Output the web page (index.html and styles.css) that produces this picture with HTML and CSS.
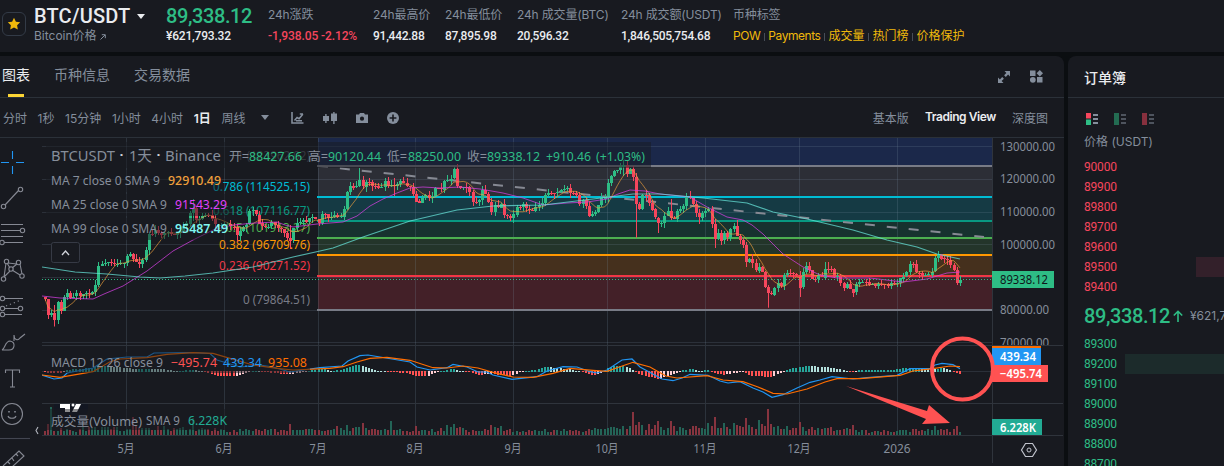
FILE: index.html
```
<!DOCTYPE html>
<html lang="zh-CN">
<head>
    <meta charset="UTF-8">
    <title>BTC/USDT</title>
    <meta name="viewport" content="width=device-width, initial-scale=1">
    <link rel="stylesheet" href="styles.css">
</head>
<body>
    <header class="ticker">
        <div class="star">
            <svg width="14" height="14" viewBox="0 0 14 14"><path d="M7 .8l1.9 3.9 4.3.6-3.1 3 .7 4.3L7 10.6l-3.8 2 .7-4.3-3.1-3 4.3-.6z" fill="#f0b90b"/></svg>
        </div>
        <div class="pair">
            <div class="pair-name">BTC/USDT <i class="caret"></i></div>
            <div class="pair-sub">Bitcoin价格 <svg width="6" height="6" viewBox="0 0 6 6"><path d="M.5 5.5L5 1M1.8.7h3.5v3.5" fill="none" stroke="#848e9c"/></svg></div>
        </div>
        <div class="last">
            <div class="last-price">89,338.12</div>
            <div class="last-cny">¥621,793.32</div>
        </div>
        <div class="stat change"><label>24h涨跌</label><b class="down">-1,938.05 -2.12%</b></div>
        <div class="stat high"><label>24h最高价</label><b>91,442.88</b></div>
        <div class="stat low"><label>24h最低价</label><b>87,895.98</b></div>
        <div class="stat vol"><label>24h 成交量(BTC)</label><b>20,596.32</b></div>
        <div class="stat amount"><label>24h 成交额(USDT)</label><b>1,846,505,754.68</b></div>
        <div class="stat tags">
            <label>币种标签</label>
            <p><a class="latin">POW</a><a class="latin">Payments</a><a>成交量</a><a>热门榜</a><a>价格保护</a></p>
        </div>
    </header>

    <div class="layout">
        <main class="panel chart-panel">
            <nav class="tabs">
                <a class="active">图表</a><a>币种信息</a><a>交易数据</a>
                <span class="tab-icons">
                    <svg width="12" height="12" viewBox="0 0 12 12" fill="#848e9c"><path d="M6.5 0H12v5.500l-1.900-1.900-2.300 2.300-1.700-1.700 2.300-2.300zM5.500 12H0V6.500l1.900 1.900 2.300-2.300 1.700 1.700-2.300 2.300z"/></svg>
                    <svg width="13" height="13" viewBox="0 0 13 13" fill="#848e9c"><path d="M0 .5h5.500V6H0zM7 7h5.500v5.500H7zM9.800 0L13 3.200 9.800 6.400 6.600 3.200z"/><circle cx="2.800" cy="9.800" r="2.900"/></svg>
                </span>
            </nav>
            <div class="intervals">
                <a>分时</a><a>1秒</a><a>15分钟</a><a>1小时</a><a>4小时</a><a class="active">1日</a><a>周线</a>
                <i class="caret small"></i>
                <svg width="13" height="12" viewBox="0 0 13 12" fill="none" stroke="#848e9c" stroke-width="1.6"><path d="M1 0v11h11.500M3.500 8.500l2.600-3 2 1.200L12 2M8.800 2H12M5 8.800h6"/></svg>
                <svg width="14" height="12" viewBox="0 0 14 12" fill="#848e9c"><path d="M2.200 2h1.400v2H6v5H3.600v2H2.200V9H0V4h2.200zM10.200 0h1.400v1.500H14V9h-2.400v3h-1.400V9H8V1.500h2.200z"/></svg>
                <svg width="12" height="10" viewBox="0 0 12 10" fill="#848e9c"><path fill-rule="evenodd" d="M0 1.600h3L4 0h4l1 1.600h3V10H0zM6 3.600a2 2 0 100 4.200 2 2 0 000-4.200z"/></svg>
                <svg width="12" height="12" viewBox="0 0 12 12"><circle cx="6" cy="6" r="6" fill="#848e9c"/><path d="M6 2.600v6.800M2.600 6h6.800" stroke="#181a20" stroke-width="1.600"/></svg>
                <span class="views"><a>基本版</a><a class="active">Trading View</a><a>深度图</a></span>
            </div>
            <div class="board">
                <svg class="tools" width="42" height="328" viewBox="0 138 42 328" fill="none" stroke="#868993" stroke-width="1.1">
                    <path d="M12.500 151v8M12.500 166v8M1 162.500h8M16 162.500h8" stroke="#2196f3"/>
                    <path d="M5 205l14-15"/><circle cx="3.500" cy="206.500" r="2.200"/><circle cx="20.500" cy="189.500" r="2.200"/>
                    <path d="M1 224.500h22M1 230.500h19M1 236.500h22M4 242.500h19"/><circle cx="22.500" cy="230.500" r="2.200"/><circle cx="2" cy="242.500" r="2.200"/>
                    <path d="M4 277L6 263M8 263l9 1M20 264l2 10M4 277l6-6M12 268l5-4M12 270l8 5M7 263l3 5"/>
                    <circle cx="3.500" cy="279" r="2.200"/><circle cx="6.500" cy="261.500" r="2.200"/><circle cx="18.500" cy="262.500" r="2.200"/><circle cx="22" cy="276" r="2.200"/><circle cx="11" cy="269" r="2.200"/>
                    <path d="M5 298.500h18M5 308.500h13M5 314.500h17"/><path d="M6 306L21 300" stroke-dasharray="1.200 3"/><circle cx="2.500" cy="298.500" r="2.200"/><circle cx="2.500" cy="308.500" r="2.200"/><circle cx="20.500" cy="308.500" r="2.200"/><circle cx="2.500" cy="314.500" r="2.200"/>
                    <path d="M2 350c3-1 3-9 8-9 6 1 5 9-1 9zM14 341v-6M14 335c0 5 4 6 6 3l5-4"/>
                    <path d="M5.500 373v-3h14v3M12.500 370v17M10 387h5"/>
                    <circle cx="12" cy="414" r="10.500"/><path d="M8 416c1 3 7 3 8 0"/><path d="M9 411v1.500M15 411v1.500" stroke-width="1.600"/>
                    <path d="M0 438.500h30" stroke="#434651"/>
                    <path d="M3 466l16-15 5 5-12 11M8 462l2 2M12 458l2 3M16 454l2 2"/>
                    <path d="M38 427l-2 3.500 2 3.500" stroke="#b2b5be"/>
                </svg>
                <svg id="chart" width="1021" height="328" viewBox="42 138 1021 328">
                    <g id="labels-back"></g>
                    <g id="zones"></g>
                    <g id="grid"></g>
                    <g id="fib"></g>
                    <g id="series"></g>
                    <g id="legend"></g>
                    <g id="axis"></g>
                    <g id="marks">
                        <circle cx="962.500" cy="369" r="30.500" fill="none" stroke="#ff5252" stroke-width="4"/>
                        <path d="M846 386L927 411 929 405 950 423 922 424 926 419z" fill="#ff5252"/>
                    </g>
                </svg>
            </div>
        </main>

        <aside class="panel book">
            <h2>订单簿</h2>
            <div class="book-modes">
                <svg width="12" height="12" viewBox="0 0 12 12"><path d="M0 0h5v5.500H0z" fill="#f6465d"/><path d="M0 6.500h5V12H0z" fill="#2ebd85"/><path d="M7 1h5v2H7zM7 5h5v2H7zM7 9h5v2H7z" fill="#848e9c"/></svg>
                <svg width="12" height="12" viewBox="0 0 12 12" opacity=".5"><path d="M0 0h5v12H0z" fill="#2ebd85"/><path d="M7 1h5v2H7zM7 5h5v2H7zM7 9h5v2H7z" fill="#848e9c"/></svg>
                <svg width="12" height="12" viewBox="0 0 12 12" opacity=".5"><path d="M0 0h5v12H0z" fill="#f6465d"/><path d="M7 1h5v2H7zM7 5h5v2H7zM7 9h5v2H7z" fill="#848e9c"/></svg>
            </div>
            <div class="book-head">价格 (USDT)</div>
            <ul class="asks">
                <li>90000</li><li>89900</li><li>89800</li><li>89700</li><li>89600</li><li class="depth-s">89500</li><li>89400</li>
            </ul>
            <div class="book-last"><b>89,338.12</b><svg width="10" height="12" viewBox="0 0 10 12"><path d="M5 12V1.500M.8 5.500L5 1.300l4.200 4.200" fill="none" stroke="#2ebd85" stroke-width="1.600"/></svg><span>¥621,793.32</span></div>
            <ul class="bids">
                <li>89300</li><li class="depth-l">89200</li><li>89100</li><li>89000</li><li>88900</li><li>88800</li><li>88700</li>
            </ul>
        </aside>
    </div>
    <script src="chart.js"></script>
</body>
</html>
```
FILE: styles.css
```
* {
    box-sizing: border-box;
}

body {
    margin: 0;
    width: 1224px;
    height: 466px;
    overflow: hidden;
    background: #0b0e11;
    color: #eaecef;
    font-family: Inter, "Noto Sans CJK SC", sans-serif;
    font-size: 12px;
}

h2, p, ul {
    margin: 0;
    padding: 0;
    list-style: none;
    font-weight: 400;
}

.ticker {
    display: flex;
    height: 52px;
    padding-left: 2px;
    background: #181a20;
    white-space: nowrap;
}

.star {
    display: flex;
    align-items: center;
    justify-content: center;
    width: 24px;
    height: 24px;
    margin-top: 12px;
    border: 1px solid #333b47;
    border-radius: 6px;
}

.pair {
    width: 132px;
    margin-left: 8px;
    padding-top: 4px;
}

.pair-name {
    font: 500 20px/24px Roboto, sans-serif;
    letter-spacing: 0.15px;
}

.caret {
    display: inline-block;
    margin-left: 2px;
    vertical-align: 4px;
    border: 4px solid transparent;
    border-top: 5px solid #eaecef;
    border-bottom: 0;
}

.caret.small {
    margin: 0 22px 0 16px;
    border-top-color: #848e9c;
}

.pair-sub {
    line-height: 15px;
    color: #848e9c;
}

.last {
    width: 102px;
    padding-top: 4px;
}

.last-price {
    font: 500 20px/24px Roboto, sans-serif;
    letter-spacing: -0.4px;
    color: #2ebd85;
}

.last-cny {
    font: 500 12px/16px Roboto, sans-serif;
    letter-spacing: -0.2px;
}

.stat {
    padding-top: 7px;
}

.stat label {
    display: block;
    line-height: 16px;
    color: #848e9c;
    letter-spacing: -0.15px;
}

.stat b {
    display: block;
    margin-top: 5px;
    font: 500 12px/16px Roboto, sans-serif;
    letter-spacing: -0.25px;
}

.stat b.down {
    color: #f6465d;
    letter-spacing: -0.1px;
}

.change { width: 105px; }
.high { width: 72px; }
.low { width: 72px; }
.vol { width: 104px; }
.amount { width: 112px; }

.tags p {
    display: flex;
    margin-top: 5px;
    line-height: 16px;
    color: #f0b90b;
}

.tags .latin {
    letter-spacing: -0.45px;
}

.tags a + a {
    margin-left: 4px;
    padding-left: 4px;
    background: linear-gradient(#474d57, #474d57) 0 5px / 1px 8px no-repeat;
}

.layout {
    display: flex;
    gap: 4px;
    margin-top: 4px;
}

.panel {
    height: 410px;
    background: #181a20;
}

.chart-panel {
    width: 1064px;
    border-radius: 0 8px 0 0;
}

.tabs {
    display: flex;
    height: 42px;
    padding: 0 21px 0 2px;
    border-bottom: 1px solid #2b3139;
    font-size: 14px;
    line-height: 38px;
    color: #848e9c;
}

.tabs a {
    margin-right: 24px;
}

.tabs .active {
    position: relative;
    color: #eaecef;
}

.tabs .active::after {
    content: "";
    position: absolute;
    left: 6px;
    bottom: 0;
    width: 16px;
    height: 3px;
    background: #fcd535;
}

.tab-icons {
    display: flex;
    gap: 20px;
    align-items: center;
    margin-left: auto;
}

.intervals {
    display: flex;
    align-items: center;
    height: 40px;
    padding: 0 16px 0 3px;
    border-bottom: 1px solid #2b3139;
    color: #848e9c;
    white-space: nowrap;
}

.intervals > a {
    margin-right: 10.6px;
}

.intervals .active {
    color: #eaecef;
    font-weight: 600;
}

.intervals > a:nth-of-type(7) {
    margin-right: 0;
}

.intervals > svg {
    margin-right: 19px;
}

.views {
    display: flex;
    gap: 16px;
    margin-left: auto;
}

.views .active {
    letter-spacing: -0.42px;
}

.board {
    display: flex;
    height: 328px;
}

.board svg {
    display: block;
}

#chart text {
    font-family: "Noto Sans", "Noto Sans CJK SC", sans-serif;
    font-size: 12px;
    fill: #868e9b;
}

#chart .title {
    font-size: 15px;
}

.book {
    width: 156px;
    border-radius: 8px 0 0 0;
    overflow: hidden;
    white-space: nowrap;
}

.book h2 {
    height: 42px;
    padding-left: 16px;
    border-bottom: 1px solid #2b3139;
    font-size: 14px;
    font-weight: 500;
    line-height: 44px;
}

.book-modes {
    display: flex;
    gap: 16px;
    padding: 15px 0 0 18px;
    height: 34px;
}

.book-head {
    height: 25px;
    padding-left: 16px;
    line-height: 20px;
    color: #848e9c;
}

.book li {
    height: 20px;
    padding-left: 16px;
    font: 12px/21px Roboto, sans-serif;
    letter-spacing: -0.2px;
}

.asks {
    color: #f6465d;
}

.bids {
    color: #2ebd85;
}

.depth-s {
    background: linear-gradient(#33202a, #33202a) 128px 0 no-repeat;
}

.depth-l {
    background: linear-gradient(#1c2b2b, #1c2b2b) 57px 0 no-repeat;
}

.book-last {
    display: flex;
    align-items: center;
    height: 37px;
    padding-left: 16px;
    color: #848e9c;
}

.book-last svg {
    flex: none;
}

.book-last b {
    margin-right: 3px;
    font: 500 20px/24px Roboto, sans-serif;
    letter-spacing: -0.4px;
    color: #2ebd85;
}

.book-last span {
    margin-left: 7px;
}
```
FILE: chart.js
```
const NS = "http://www.w3.org/2000/svg";
const UP = "#2ebd85";
const DOWN = "#f6465d";

function add(group, tag, attrs, text) {
    const el = document.createElementNS(NS, tag);
    for (const key in attrs) el.setAttribute(key, attrs[key]);
    if (text) el.textContent = text;
    document.getElementById(group).appendChild(el);
    return el;
}

function rect(group, x, y, width, height, fill, extra) {
    return add(group, "rect", Object.assign({ x, y, width, height, fill }, extra));
}

function line(group, points, stroke, extra) {
    return add(group, "polyline", Object.assign({ points, stroke, fill: "none" }, extra));
}

// text with a fixed width
function label(group, x, y, width, text, fill, extra) {
    const attrs = { x, y, textLength: width, lengthAdjust: "spacingAndGlyphs" };
    if (fill) attrs.style = "fill:" + fill;
    return add(group, "text", Object.assign(attrs, extra), text);
}

function at(keys, x) {
    if (x <= keys[0]) return keys[1];
    for (let i = 2; i < keys.length; i += 2) {
        if (x <= keys[i]) {
            const t = (x - keys[i - 2]) / (keys[i] - keys[i - 2]);
            return keys[i - 1] + (keys[i + 1] - keys[i - 1]) * t;
        }
    }
    return keys[keys.length - 1];
}

let seed = 11;
function rnd() {
    seed = (seed * 16807) % 2147483647;
    return seed / 2147483647;
}

// closes: x, y
const closes = [
    43,298, 45,299, 47.7,316, 51,312, 54,322.7, 57.3,301, 60.5,312, 63.5,298, 66.5,292, 70,298, 73,297, 76,293, 80,297,
    84,293, 88,294, 92,292, 95.3,285, 98.3,266, 101,264, 104,262.7, 110,262, 113,265, 116,263, 119,265, 122,261, 124,263,
    127,255, 130,254, 133,258.7, 136,262, 139,264, 142,261, 145,254, 148.3,233.7, 151,236, 154,230, 157,231, 160,236,
    163,233, 167,232, 173,235, 180,231, 183,226, 187,222.7, 189.5,212.7, 192.7,207.7, 195.7,220, 199,219, 202,216,
    205,214.6, 208,214, 211,217.7, 214,224, 217,226, 222,225, 227,224, 232,227.7, 235,227, 237.5,239.3, 240.5,229,
    243.5,226.7, 247,224, 249.4,211, 252,210, 255,212.7, 258,222, 261,226.7, 264,225, 267,230, 270,222, 273,223,
    276,227.7, 282,229, 285.5,236, 288,239, 291,241, 293.5,227.7, 296.5,223, 300,222, 303,220, 306,222, 309,217.7,
    314.7,217, 317.8,226, 321,214, 324,213, 327.5,217.7, 331,217, 335,214, 338,217, 341.5,216, 344,207.7, 346.7,192,
    350,186, 353,187.7, 356,186.7, 359.3,180, 362.6,186.7, 365.6,182, 368.6,182, 371.6,186, 375,186, 378.5,188.7,
    382,187, 385,180, 388,186.7, 391.6,185, 395,186, 400.4,181, 403,183, 406.6,186, 409.5,186.7, 412.4,192.7, 415.5,201,
    419,204, 422,198.7, 425.6,195, 428.5,198, 431.6,196, 434,187.7, 437,187.7, 441,190, 444.3,181, 448,180, 451.6,178,
    454,168, 456.5,186, 460,187.7, 463,186.7, 466.6,187, 469.3,192, 472.3,202, 478.3,202.7, 481.3,189, 485,194, 488,201,
    491.6,212, 494.6,205, 498,207.7, 501.6,202.7, 504.6,217.7, 507.6,216, 510.6,218.5, 513.6,214, 516.6,206.7, 520,207.7,
    522.6,204, 526,208.7, 529,210, 532,211, 535,207.7, 538,204, 540.6,207.7, 543.3,196, 546.6,194, 549.3,192.7, 552.6,194,
    556,193.7, 559,191, 566.6,187.7, 570,192.7, 573,192.7, 576.6,195, 579.3,204, 582.6,200, 585.6,205, 588.6,216, 592,214,
    595,212.7, 598,206, 601.6,197.7, 604.6,197.7, 607.3,184, 610.6,176.7, 614,171, 617,170, 620,167, 623.3,164, 626,175,
    629.3,168, 632.6,174, 636,203.7, 639,210, 642.5,194, 645.5,195, 648.6,202.7, 651.6,209, 655,217.7, 658,223, 661.3,223,
    664.3,216, 667.3,210, 670.3,217.7, 673.3,220, 676.6,211, 680,208.7, 683.3,206, 686.6,196.7, 689.3,197.7, 692.3,202.7,
    695.3,212.7, 699,217.7, 702,213, 705,211, 708.6,209, 711.3,223, 714.3,240, 717.3,232, 721,241, 724.3,233, 727.3,237.7,
    730,229, 733.3,225, 736.3,235, 739.3,239, 743.3,245, 746.3,262.7, 749.3,259, 752.3,263, 755.3,271, 758.6,267, 762,272.7,
    765.3,288.7, 768.3,293.7, 771.3,294.3, 774.3,287.7, 777.3,282.7, 780.6,286, 783.3,275, 787.3,273, 793,274, 796.6,275,
    799.3,289, 802.3,273, 806,266, 809,270, 812.3,279, 815.6,279, 818.6,275, 821.6,277.7, 825,267.7, 828.3,269, 831.3,269,
    834.3,277.7, 837.3,276, 840.3,283, 843.3,289, 846.6,284, 850,289, 853.3,292.7, 856.6,282.7, 865,281.3, 868.3,285,
    871.6,283.7, 875,286, 878.3,284, 885,284.5, 888.3,286.7, 891.6,282, 894.3,285, 897.6,282.7, 900.6,277.7, 903.3,276.7,
    906.6,272, 909.3,263.7, 912.6,264, 916,273, 919.3,273, 922.3,276, 928.6,274.3, 931.3,273, 934.3,258.7, 938.3,253,
    941.3,259, 947.3,260, 950.6,265, 953.3,268, 956.2,282.7, 960.3,279.3
];

// long wicks: x, top, bottom
const wicks = [[54, 305, 326.5], [192, 199, 221], [238, 224, 242], [291, 225, 249], [359, 168, 187], [394, 178, 196],
    [457, 164, 188], [623, 160, 176], [636, 173, 237.7], [659, 217, 233], [670, 199, 220], [689, 191, 199], [699, 209, 224],
    [714, 219, 248], [736, 220, 236], [768, 285, 307.7], [799, 271, 297], [825, 262, 279], [829, 262, 273], [938, 251, 262]];

const ma25 = "42,296 60,298 93,299 104,294 123,286 147,271 173,251 193,240 213,230 233,225 255,223 277,222 285,225 293,227 317,224 343,222 357,216 370,206 383,199 397,193 410,188 423,187 440,188 460,187 480,189 503,193 523,198 543,205 567,203 587,202 607,199 618,194 630,190 645,191 660,194 690,197 707,207 727,217 743,220 752,225 763,234 783,254 803,267 820,275 837,278 870,278 903,282 927,279 947,273 960,272";
const ma99 = "42,267 75,272 107,274 140,277 160,278 185,276 213,273 253,267 293,257 320,251 333,248 363,237 410,221 457,210 493,206 543,205 593,199 633,194 660,194 703,198 747,203 773,212 807,219 853,230 887,240 917,247 937,254 960,259";
const macd = "42,375 54,379 62,378 67,373 93,368 107,359 127,357 147,357 154,353 190,352.5 210,353.5 217,360 240,367 260,365 273,367 290,372 310,369 320,367.7 342,366 348,361 360,355.7 368,355 380,357 398,360 410,362 417,367 430,370 447,367.7 453,364.5 467,367 478,372 487,372 493,375 512,379.3 537,376.7 547,371 563,366.7 577,367 590,371.7 597,373 607,370 622,360 632,359 640,367 662,379 673,380.7 682,378 690,374.3 708,375.3 720,381 728,383 740,381.7 753,388 763,392 772,397.3 783,394.7 797,388 810,382.3 820,380 832,376.7 853,379 867,377.7 897,375.3 910,368.7 930,368.7 935,365 942,363.3 953,364.7 960,368.7";
const signal = "42,375 60,377.3 93,371.7 110,361.7 120,359 147,357.7 167,354.3 193,352.7 213,353.3 230,358.3 253,365 277,368.3 293,370 330,368.3 343,366.7 357,362 370,358.3 387,357.3 410,360.3 433,367.7 447,368 463,366 478,368 493,372.3 513,377 533,377.3 553,373.3 570,368.3 593,370.3 607,371.3 620,366.7 633,362.3 650,367 657,371 666,376 677,378 707,375.7 723,380 743,381.7 758,387 773,393.3 787,394 807,389 825,382 837,378.7 860,378.7 900,375.3 913,371 933,368.7 950,366 960,366.7";
const histKeys = [43,1, 48,-2, 61,-2, 67,2, 90,4, 107,6, 118,5, 135,3, 150,3.5, 165,3, 175,1, 195,2, 207,-1, 217,-5, 236,-5.5, 245,-2,
    255,1, 265,-1, 288,-3.5, 305,-1, 312,2, 325,3, 332,1, 340,2, 350,5, 358,7, 365,5, 372,3, 379,1, 395,-1, 405,-2, 415,-5,
    428,-5, 435,-2, 443,1, 453,3.5, 460,1, 470,-1, 480,-4, 490,-3, 500,-4, 512,-5, 520,-1, 530,1, 547,5, 560,4, 575,2,
    582,-1, 594,-4, 602,-2, 608,4, 615,6, 625,6, 632,3, 637,-1, 640,-4, 650,-6, 660,-8, 668,-5, 679,-1, 684,2, 692,3.5,
    700,1, 708,2, 715,-2, 724,-4, 735,-2, 743,-1, 753,-5, 772,-6, 783,-1, 788,3, 807,6, 828,5, 843,2, 850,-1, 855,-1, 858,1.5,
    890,1.5, 903,4, 920,4, 935,3, 943,4, 950,2, 955,-1.5, 960,-3];
const volBase = [43,6, 95,7, 180,8, 225,6, 300,4.5, 345,8, 420,5, 455,8, 470,5, 490,8, 540,4.5, 610,7, 640,11, 665,8, 690,7, 712,11,
    740,10, 768,12, 790,8, 800,8, 840,7, 870,4, 910,5, 960,5];
const volSpikes = { 47: 11, 50: 28, 132: 18, 193: 17, 290: 11, 346: 10, 361: 12, 392: 14, 415: 9, 446: 10, 455: 11, 490: 10,
    502: 9, 634: 23, 638: 13, 657: 14, 670: 14, 714: 18, 745: 17, 758: 15, 768: 26, 799: 13, 831: 8, 853: 10, 935: 9, 956: 9, 960: 3 };

// fibonacci zones
const zones = [[138, "#1b284a"], [166, "#2c2e36"], [197, "#153a44"], [221, "#17322f"], [238, "#23352a"], [255, "#45301d"], [276, "#432028"], [310]];
for (let i = 0; i < zones.length - 1; i++) {
    rect("zones", 318, zones[i][0], 674, zones[i + 1][0] - zones[i][0], zones[i][1]);
}

const months = [[126, "5月", 17], [224, "6月", 17], [318, "7月", 17], [415, "8月", 17], [513, "9月", 17], [607, "10月", 23],
    [705, "11月", 23], [799, "12月", 23], [897, "2026", 27]];
months.forEach(m => {
    rect("grid", m[0], 138, 1, 297, "rgba(120,140,160,.22)");
    label("axis", m[0] - m[2] / 2, 453, m[2], m[1]);
});
[146, 179, 212, 244, 277, 310, 342, 371].forEach(y => rect("grid", 42, y, 950, 1, "rgba(120,140,160,.2)"));
[345, 403, 435].forEach(y => rect("grid", 42, y, 1021, 1, "#2f343c"));

const levels = [
    [166, "#787b86", "1 (123962.02)", 73, 160],
    [197, "#00bcd4", "0.786 (114525.15)", 97, 191],
    [221, "#089981", "0.618 (107116.77)", 97, 215],
    [238, "#4caf50", "0.5 (101913.27)", 84, 232],
    [255, "#ff9800", "0.382 (96709.76)", 91, 249],
    [276, "#f23645", "0.236 (90271.52)", 91, 270],
    [310, "#787b86", "0 (79864.51)", 67, 304]
];
levels.forEach(l => {
    rect("fib", 317, l[0] - 1, 675, 2, l[1]);
    label("labels-back", 310 - l[3], l[4], l[3], l[2], l[1], l[0] === 166 ? { opacity: 0.6 } : {});
});
line("fib", "318,166 984,237", "#868993", { "stroke-width": 2, "stroke-dasharray": "10 12" });

// candles, histogram and volume
const step = 3.144;
const count = 292;
let prev = 297;
let prevHist = 0;
const ys = [];
for (let i = 0; i < count; i++) {
    const x = 45 + i * step;
    const y = at(closes, x);
    ys.push(y);
    const color = y <= prev ? UP : DOWN;
    const left = Math.round(x) - 1;
    const top = Math.round(Math.min(prev, y));
    const height = Math.max(1, Math.round(Math.abs(prev - y)));
    const long = wicks.find(w => Math.abs(w[0] - x) <= step / 2);
    const high = long ? long[1] : top - Math.round(rnd() * 5);
    const low = long ? long[2] : top + height + Math.round(rnd() * 5);
    rect("series", left + 1, high, 1, low - high, color);
    rect("series", left, top, 3, height, color);

    const hist = at(histKeys, x);
    const size = Math.max(1, Math.round(Math.abs(hist)));
    const histColor = hist >= 0 ? (hist >= prevHist ? "#26a69a" : "#b2dfdb") : (hist <= prevHist ? "#ff5252" : "#ffcdd2");
    rect("series", left, hist >= 0 ? 372 - size : 371, 2, size, histColor);
    prevHist = hist;

    let vol = at(volBase, x) * (0.5 + rnd() * 0.7);
    for (const key in volSpikes) {
        if (Math.abs(key - x) <= step / 2) vol = volSpikes[key];
    }
    vol = Math.round(vol);
    rect("series", left, 435 - vol, 2, vol, color === UP ? "#236457" : "#87343f");
    prev = y;
}

// moving averages
let ma7 = "";
for (let i = 0; i < count; i++) {
    const part = ys.slice(Math.max(0, i - 6), i + 1);
    ma7 += (45 + i * step).toFixed(1) + "," + (part.reduce((a, b) => a + b) / part.length).toFixed(1) + " ";
}
line("series", ma7, "#f0a03c", { "stroke-opacity": 0.65 });
line("series", ma25, "#d13fdf", { "stroke-opacity": 0.75 });
line("series", ma99, "#66e0d5", { "stroke-opacity": 0.75, "stroke-width": 1.2 });
line("series", macd, "#2196f3", { "stroke-width": 1.2 });
line("series", signal, "#ff6d00", { "stroke-width": 1.2 });
line("series", "42,279.5 992,279.5", UP, { "stroke-dasharray": "1 2" });

// logo mark at the foot of the indicator pane
add("legend", "path", { d: "M54 404h34v6q-3 8-8 12H62q-6-5-8-12z", fill: "#131722" });
add("legend", "path", { d: "M60 404h10v8h-5v-4h-5zM76 404h5l-4 8h-5z", fill: "#fff" });
add("legend", "circle", { cx: 73, cy: 405, r: 1.5, fill: "#fff" });

// legend rows
const veil = "rgba(24,26,32,.5)";
rect("legend", 46, 142, 605, 26, veil);
rect("legend", 46, 170, 176, 22, veil);
rect("legend", 46, 194, 183, 22, veil);
rect("legend", 46, 218, 183, 22, veil);
rect("legend", 46, 352, 264, 21, veil);
rect("legend", 46, 409, 186, 21, veil);
const big = { class: "title" };
label("legend", 51, 161, 64, "BTCUSDT", null, big);
label("legend", 119, 160, 5, "·", "#d1d4dc", big);
label("legend", 129, 161, 23, "1天", null, big);
label("legend", 156, 160, 5, "·", "#d1d4dc", big);
label("legend", 165, 161, 56, "Binance", null, big);
[[229, 20, "开="], [308, 20, "高="], [387, 20, "低="], [467, 20, "收="]].forEach(t => label("legend", t[0], 161, t[1], t[2]));
[[249, 53, "88427.66"], [328, 53, "90120.44"], [408, 53, "88250.00"], [487, 53, "89338.12"], [546, 45, "+910.46"], [596, 49, "(+1.03%)"]]
    .forEach(t => label("legend", t[0], 161, t[1], t[2], UP));
label("legend", 51, 185, 109, "MA 7 close 0 SMA 9");
label("legend", 168, 185, 53, "92910.49", "#f0a03c", { "font-weight": 500 });
label("legend", 51, 209, 116, "MA 25 close 0 SMA 9");
label("legend", 175, 209, 52, "91543.29", "#e040fb");
label("legend", 51, 233, 116, "MA 99 close 0 SMA 9");
label("legend", 175, 233, 53, "95487.49", "#7ff5ef", { "font-weight": 600 });
rect("legend", 51.5, 242.5, 28, 20, "#181a20", { rx: 2, stroke: "#363a45" });
line("legend", "62,255 65.5,251 69,255", "#d1d4dc", { "stroke-width": 1.3 });
label("legend", 51, 367, 112, "MACD 12 26 close 9");
label("legend", 171, 367, 46, "−495.74", "#ff5252");
label("legend", 223, 367, 39, "439.34", "#2196f3");
label("legend", 268, 367, 39, "935.08", "#ff6d00");
label("legend", 51, 426, 91, "成交量(Volume)");
label("legend", 146, 425, 34, "SMA 9");
label("legend", 188, 425, 39, "6.228K", "#22ab94");

// price axis
rect("axis", 992, 138, 1, 325, "#2f343c");
[[130000, 151], [120000, 183], [110000, 216], [100000, 249], [80000, 314], [70000, 347]].forEach(p => {
    label("axis", 1000, p[1], p[0] > 99999 ? 55 : 49, p[0] + ".00");
});
rect("axis", 993, 345, 70, 12, "#181a20");
rect("axis", 993, 345, 70, 1, "#2f343c");
rect("axis", 992, 271, 62, 17, UP);
label("axis", 1000, 284, 48, "89338.12", "#10171b");
rect("axis", 992, 346, 49, 10, "#ff6d00");
rect("axis", 992, 348, 49, 17, "#2196f3");
label("axis", 1000, 361, 36, "439.34", "#fff", { "font-weight": 600 });
rect("axis", 992, 365, 56, 17, "#ff5252");
label("axis", 1000, 378, 42, "−495.74", "#fff", { "font-weight": 600 });
rect("axis", 992, 419, 50, 16, "#22ab94");
label("axis", 1000, 432, 36, "6.228K", "#fff", { "font-weight": 600 });
add("axis", "path", { d: "M1025.5 443.5h7l4 6.5-4 6.5h-7l-4-6.5z", fill: "none", stroke: "#c1c4cd", "stroke-width": 1.2 });
add("axis", "circle", { cx: 1029, cy: 450, r: 2, fill: "none", stroke: "#c1c4cd" });
```
